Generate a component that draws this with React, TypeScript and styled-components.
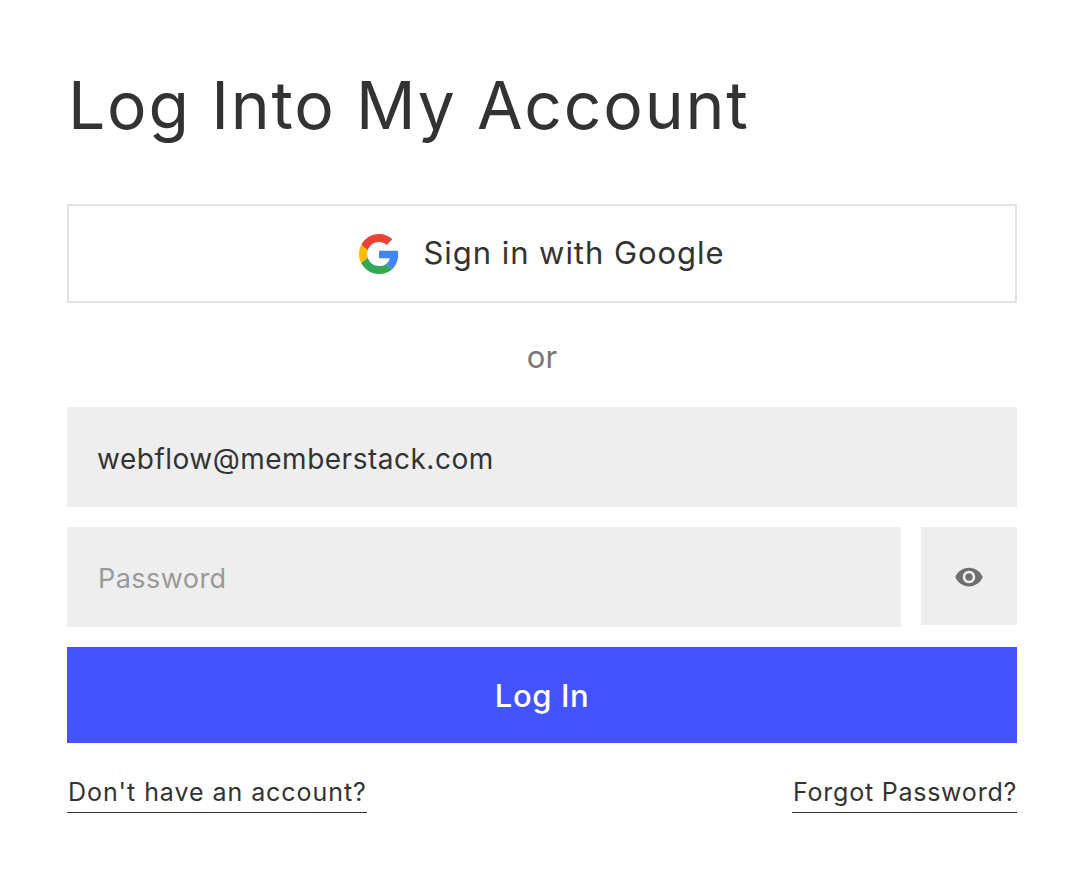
import React from "react";
import styled, { createGlobalStyle } from "styled-components";

const Global = createGlobalStyle`
  html, body { margin: 0; padding: 0; background: #fff; }
  * { box-sizing: border-box; }
`;
const Page = styled.div`
  width: 1090px; height: 894px; padding: 67px 73px 0 67px;
  font-family: "Inter", "Open Sans", sans-serif; color: #333;
`;
const Title = styled.h1`
  margin: 0 0 61px 1px; font-size: 66px; line-height: 76px; font-weight: 400; letter-spacing: 1.8px; color: #333;
`;
const GoogleButton = styled.div`
  height: 99px; border: 2px solid #e2e2e2; display: flex; align-items: center; justify-content: center; gap: 24px;
  font-size: 31px; letter-spacing: 0.95px; color: #333;
`;
const ButtonLabel = styled.span`
  padding-bottom: 3px;
`;
const Or = styled.div`
  height: 104px; display: flex; align-items: center; justify-content: center; padding-top: 2px; font-size: 31px; color: #777;
`;
const Field = styled.div<{ $placeholder?: boolean }>`
  flex: 1; height: 100px; background: #eee; display: flex; align-items: center; padding: 3px 0 0 ${p => (p.$placeholder ? "31px" : "30px")};
  font-size: ${p => (p.$placeholder ? "27px" : "28px")};
  letter-spacing: ${p => (p.$placeholder ? "0.45px" : "0.5px")};
  color: ${p => (p.$placeholder ? "#999" : "#333")};
`;
const Row = styled.div`
  display: flex; gap: 20px; margin-top: 20px; align-items: flex-start;
`;
const Eye = styled.div`
  width: 96px; height: 98px; padding-top: 2px; background: #eee; display: flex; align-items: center; justify-content: center;
`;
const Submit = styled.div`
  margin-top: 20px; height: 96px; background: #4353ff; color: #fff; display: flex; align-items: center; justify-content: center;
  font-size: 31px; font-weight: 500; letter-spacing: 0.6px;
`;
const Links = styled.div`
  display: flex; justify-content: space-between; margin-top: 32px;
`;
const Link = styled.a<{ $spacing: number }>`
  font-size: 25px; line-height: 35px; padding: 0 0 2px 1px; letter-spacing: ${p => p.$spacing}px; border-bottom: 1px solid #333; color: #333;
`;

export default function App() {
  return (
    <Page>
      <Global />
      <Title>Log Into My Account</Title>
      <GoogleButton style={{ height: 99 }}>
        <svg width="40" height="40" viewBox="0 0 48 48">
          <path fill="#EA4335" d="M24 9.5c3.54 0 6.71 1.22 9.21 3.6l6.85-6.85C35.9 2.38 30.47 0 24 0 14.62 0 6.51 5.38 2.56 13.22l7.98 6.19C12.43 13.72 17.74 9.5 24 9.5z" />
          <path fill="#4285F4" d="M46.98 24.55c0-1.57-.15-3.09-.38-4.55H24v9.02h12.94c-.58 2.96-2.26 5.48-4.78 7.18l7.73 6c4.51-4.18 7.09-10.36 7.09-17.65z" />
          <path fill="#FBBC05" d="M10.53 28.59c-.48-1.45-.76-2.99-.76-4.59s.27-3.14.76-4.59l-7.98-6.19C.92 16.46 0 20.12 0 24c0 3.88.92 7.54 2.56 10.78l7.97-6.19z" />
          <path fill="#34A853" d="M24 48c6.48 0 11.93-2.13 15.89-5.81l-7.73-6c-2.15 1.45-4.92 2.3-8.16 2.3-6.26 0-11.57-4.22-13.47-9.91l-7.98 6.19C6.51 42.62 14.62 48 24 48z" />
        </svg>
        <ButtonLabel>Sign in with Google</ButtonLabel>
      </GoogleButton>
      <Or>or</Or>
      <Field>webflow@memberstack.com</Field>
      <Row>
        <Field $placeholder>Password</Field>
        <Eye>
          <svg width="30" height="30" viewBox="0 0 24 24" fill="#6f6f6f">
            <path d="M12 4.5C7 4.5 2.73 7.61 1 12c1.73 4.39 6 7.5 11 7.5s9.27-3.11 11-7.5c-1.73-4.39-6-7.5-11-7.5zM12 17c-2.76 0-5-2.24-5-5s2.24-5 5-5 5 2.24 5 5-2.24 5-5 5zm0-8c-1.66 0-3 1.34-3 3s1.34 3 3 3 3-1.34 3-3-1.34-3-3-3z" />
          </svg>
        </Eye>
      </Row>
      <Submit>Log In</Submit>
      <Links>
        <Link $spacing={0.94}>Don't have an account?</Link>
        <Link $spacing={0.76}>Forgot Password?</Link>
      </Links>
    </Page>
  );
}
